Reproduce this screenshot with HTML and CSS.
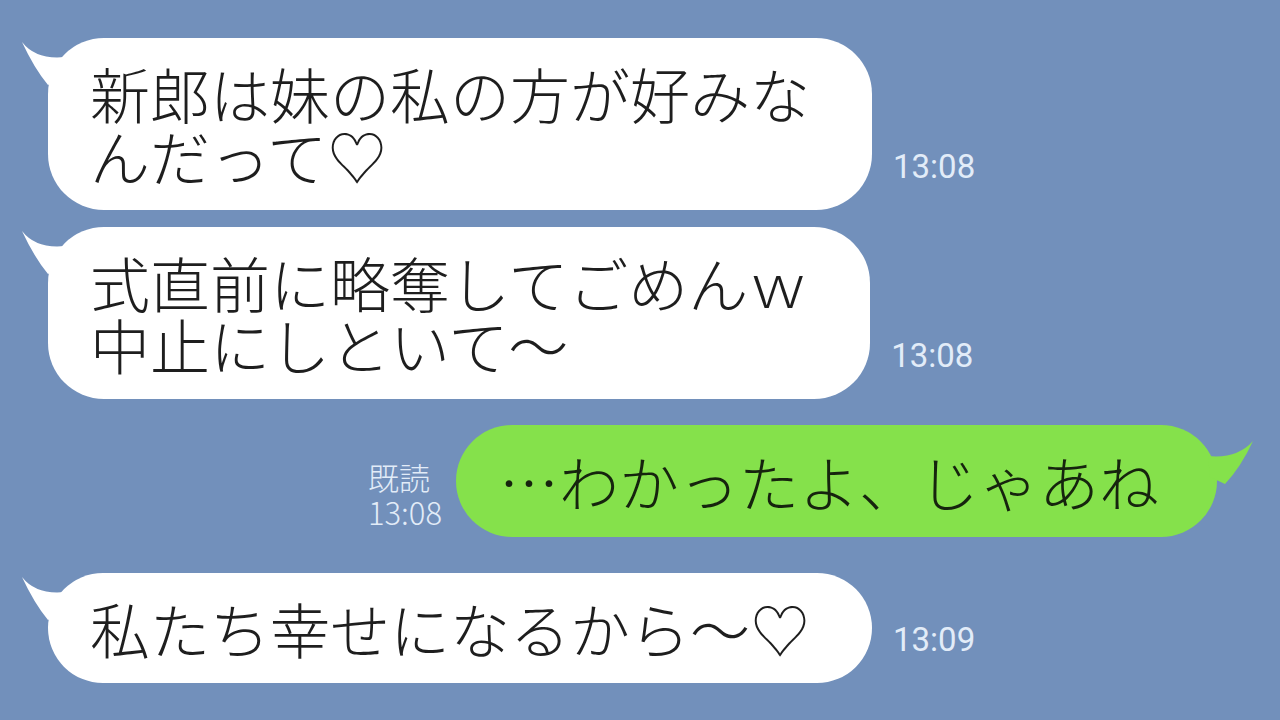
FILE: index.html
```html
<!DOCTYPE html>
<html lang="ja">
<head>
  <meta charset="UTF-8" />
  <title>トーク</title>
  <link rel="stylesheet" href="styles.css">
</head>
<body>
  <div class="chat">
    <div class="row in first">
      <div class="bubble white">
        <svg class="tail" viewBox="0 0 60 60"><path d="M4 4 Q18 22 47 19 L45 40 L30 47 Q16 30 4 4 Z"/></svg>
        新郎は妹の私の方が好みな<br>んだって♡
      </div>
      <div class="meta">13:08</div>
    </div>

    <div class="row in second">
      <div class="bubble white">
        <svg class="tail" viewBox="0 0 60 60"><path d="M4 4 Q18 22 47 19 L45 40 L30 47 Q16 30 4 4 Z"/></svg>
        式直前に略奪してごめんｗ<br>中止にしといて〜
      </div>
      <div class="meta">13:08</div>
    </div>

    <div class="row out">
      <div class="meta read">既読<br>13:08</div>
      <div class="bubble green">
        <svg class="tail" viewBox="0 0 60 60"><path d="M58 4 Q42 22 13 19 L15 40 L30 47 Q46 30 58 4 Z"/></svg>
        …わかったよ、じゃあね
      </div>
    </div>

    <div class="row in last">
      <div class="bubble white">
        <svg class="tail" viewBox="0 0 60 60"><path d="M4 4 Q18 22 47 19 L45 40 L30 47 Q16 30 4 4 Z"/></svg>
        私たち幸せになるから〜♡
      </div>
      <div class="meta">13:09</div>
    </div>
  </div>
</body>
</html>
```

FILE: styles.css
```css
* { box-sizing: border-box; }

html, body {
  margin: 0;
  height: 100%;
}

body {
  background: #7290bb;
  font-family: "Noto Sans CJK JP", "Noto Sans", sans-serif;
  overflow: hidden;
}

.chat {
  display: flex;
  flex-direction: column;
  padding: 38px 63px 0 48px;
}

.row {
  display: flex;
  align-items: flex-end;
}

.row.second { margin-top: 17px; }
.row.out { margin-top: 26px; justify-content: flex-end; }
.row.last { margin-top: 36px; }

.bubble {
  position: relative;
  font-size: 60px;
  font-weight: 300;
  line-height: 62px;
  border-radius: 56px;
  padding: 24px 62px 24px 42px;
  white-space: nowrap;
}

.bubble.white {
  background: #fff;
  color: #1e1e1e;
}

.bubble.green {
  background: #85e14b;
  color: #16240e;
  padding: 25px 58px 25px 43px;
}

.tail {
  position: absolute;
  width: 60px;
  height: 60px;
}

.white .tail { left: -30px; top: 0; fill: #fff; }
.green .tail { right: -38px; top: 12px; fill: #85e14b; }

.meta {
  color: #e2ecf8;
  font-family: Roboto, "Noto Sans CJK JP", sans-serif;
  font-size: 33px;
  line-height: 36px;
}

.row.in .meta {
  margin: 0 0 25px 21px;
}

.meta.read {
  margin: 0 14px 8px 0;
  font-size: 31px;
  line-height: 35px;
  font-weight: 300;
  font-family: "Noto Sans CJK JP", Roboto, sans-serif;
}
```
